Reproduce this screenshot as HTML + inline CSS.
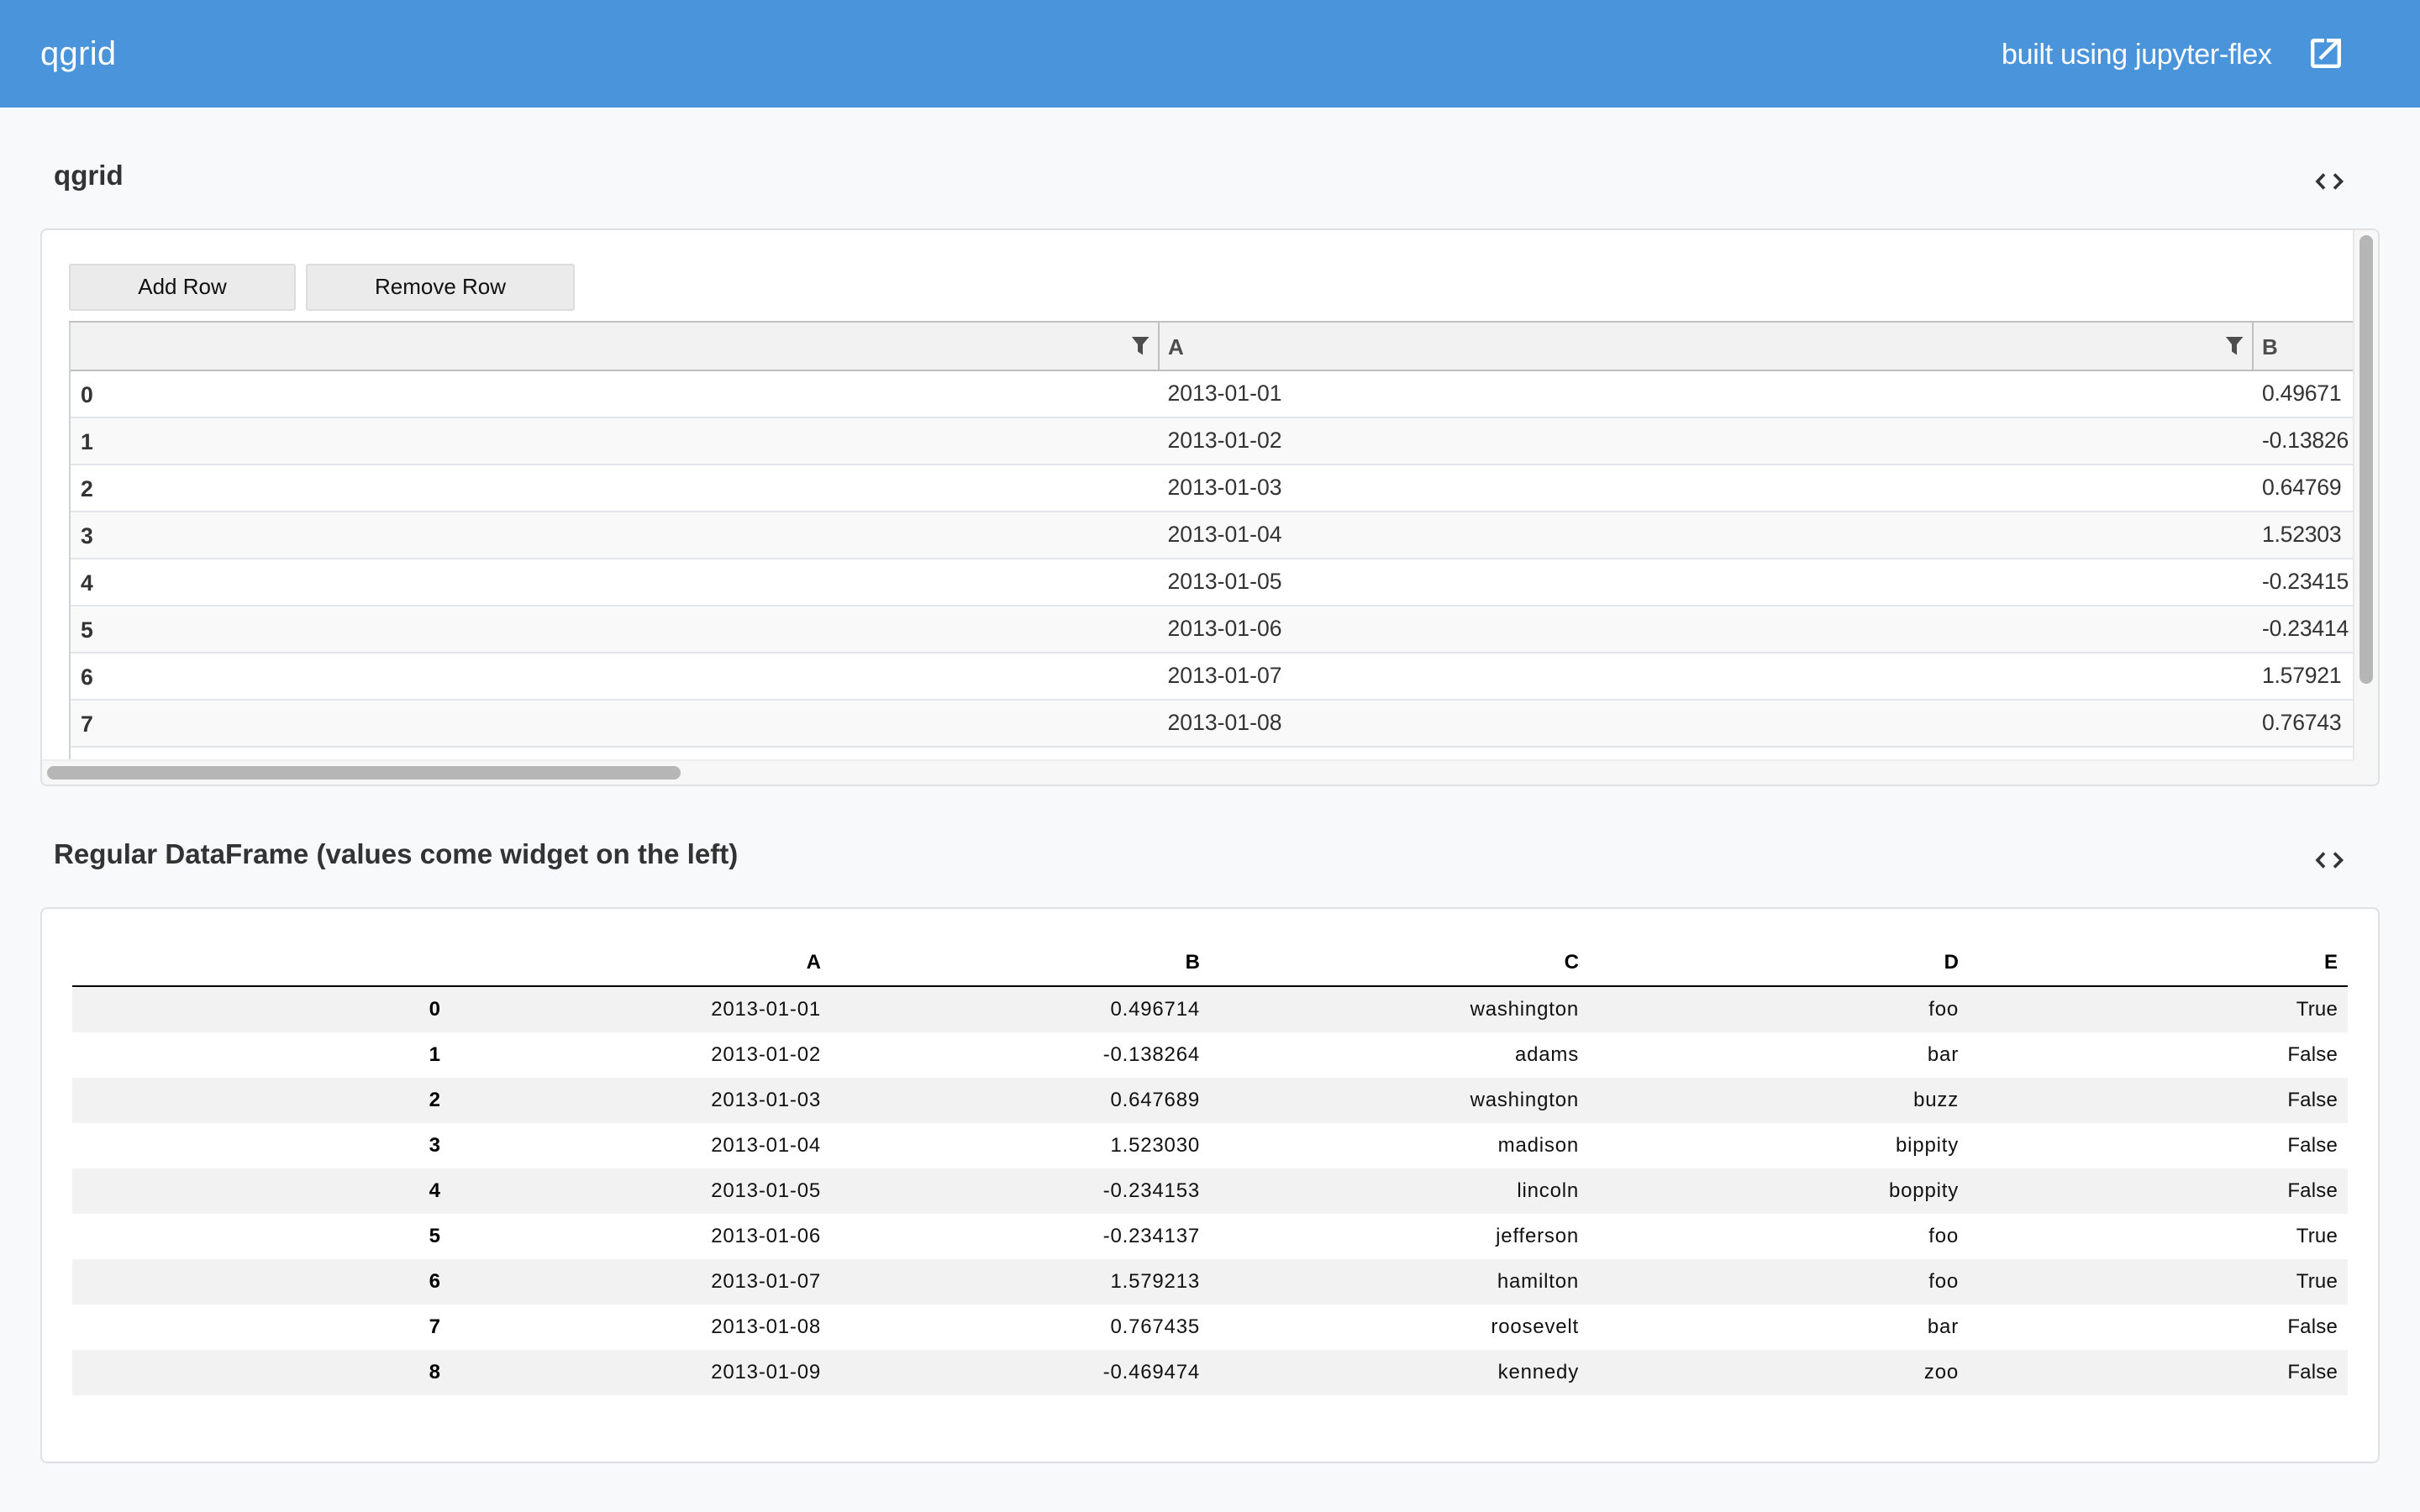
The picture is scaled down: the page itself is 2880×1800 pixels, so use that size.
<!DOCTYPE html>
<html>
<head>
<meta charset="utf-8">
<title>qgrid</title>
<style>
html,body{margin:0;padding:0;width:2880px;height:1800px;overflow:hidden;background:#f8f9fb;font-family:"Liberation Sans",Arial,sans-serif;color:#333}
div,span,table,td,th,tr,svg,button{box-sizing:border-box}
.abs{position:absolute}
#hdr{position:absolute;left:0;top:0;width:2880px;height:128px;background:#4a94dc;color:#fff}
#brand{position:absolute;left:48px;top:40px;font-size:40px;line-height:48px;letter-spacing:.3px}
#built{position:absolute;left:2382px;top:42px;font-size:34px;line-height:46px;white-space:nowrap;letter-spacing:-.3px}
.title{position:absolute;left:64px;font-size:33.1px;line-height:44px;font-weight:bold;color:#333;white-space:nowrap}
.card{position:absolute;left:48px;width:2784px;background:#fff;border:2px solid #dfe0e2;border-radius:8px;overflow:hidden}
.btn{position:absolute;top:314px;height:56px;background:#ebebeb;border:2px solid #dcdcdc;border-radius:3px;font-size:26px;line-height:50px;text-align:center;color:#111}
.gh{position:absolute;top:382px;height:60px;background:#f2f2f2;border-top:2px solid #c0c0c0;border-bottom:2px solid #bdbdbd}
.ghl{position:absolute;font-size:26px;line-height:30px;font-weight:bold;color:#4d4d4d;top:398px}
.sep{position:absolute;top:384px;width:2px;height:56px;background:#c0c0c0}
.r{position:absolute;left:84px;width:2716px;height:56px;border-bottom:2px solid #e2e6ea;font-size:26.6px;line-height:52px;color:#333;overflow:hidden}
.r.o{background:#f9f9f9}
.r span{position:absolute;top:0;white-space:nowrap}
.r .i{left:12px;font-weight:bold;top:2px}
.r .a{left:1305.5px}
.r .b{left:2608px;letter-spacing:-.25px}
.df{position:absolute;left:86px;top:1118px;width:2708px;table-layout:fixed;border-collapse:collapse;font-size:24px;color:#111}
.df th,.df td{padding:0 12px 0 0;text-align:right;height:54px;line-height:54px;white-space:nowrap}
.df thead th{height:56px;border-bottom:2px solid #000;font-weight:bold;color:#000;line-height:54px}
.df tbody th{font-weight:bold;color:#000}
.df tbody tr:nth-child(odd){background:#f2f2f2}
.df td{letter-spacing:.8px}
.df td.e{letter-spacing:.2px}
</style>
</head>
<body>
<div id="hdr">
  <div id="brand">qgrid</div>
  <div id="built">built using jupyter-flex</div>
  <svg class="abs" style="left:0;top:0" width="2880" height="128" viewBox="0 0 2880 128" fill="none" stroke="#fff" stroke-width="4.4">
    <path d="M2766 48.2H2754Q2752.2 48.2 2752.2 50V77Q2752.2 78.8 2754 78.8H2782Q2783.8 78.8 2783.8 77V60"/>
    <path d="M2761 70L2783 48"/>
    <path d="M2769 48.2H2783.8V60"/>
  </svg>
</div>

<div class="title" style="top:187.5px">qgrid</div>
<svg class="abs" style="left:2750px;top:200px" width="44" height="32" viewBox="2750 200 44 32" fill="none" stroke="#333" stroke-width="3.6">
  <path d="M2766 207.5L2758 216L2766 224.5"/><path d="M2778 207.5L2786.5 216L2778 224.5"/>
</svg>

<div class="card" style="top:272px;height:664px"></div>
<div class="btn" style="left:82px;width:270px">Add Row</div>
<div class="btn" style="left:364px;width:320px">Remove Row</div>

<div class="gh" style="left:82px;width:2718px"></div>
<div class="abs" style="left:82px;top:384px;width:2px;height:520px;background:#cfd2d6"></div>
<div class="sep" style="left:1378px"></div>
<div class="sep" style="left:2680px"></div>
<div class="ghl" style="left:1390px">A</div>
<div class="ghl" style="left:2692px">B</div>
<svg class="abs" style="left:1347px;top:401px" width="21" height="22" viewBox="0 0 21 22"><path fill="#4d4d4d" d="M0 0H20.5L13 9V21.5L7 17.5V9Z"/></svg>
<svg class="abs" style="left:2649px;top:401px" width="21" height="22" viewBox="0 0 21 22"><path fill="#4d4d4d" d="M0 0H20.5L13 9V21.5L7 17.5V9Z"/></svg>

<div class="r" style="top:442px"><span class="i">0</span><span class="a">2013-01-01</span><span class="b">0.49671</span></div>
<div class="r o" style="top:498px"><span class="i">1</span><span class="a">2013-01-02</span><span class="b">-0.13826</span></div>
<div class="r" style="top:554px"><span class="i">2</span><span class="a">2013-01-03</span><span class="b">0.64769</span></div>
<div class="r o" style="top:610px"><span class="i">3</span><span class="a">2013-01-04</span><span class="b">1.52303</span></div>
<div class="r" style="top:666px"><span class="i">4</span><span class="a">2013-01-05</span><span class="b">-0.23415</span></div>
<div class="r o" style="top:722px"><span class="i">5</span><span class="a">2013-01-06</span><span class="b">-0.23414</span></div>
<div class="r" style="top:778px"><span class="i">6</span><span class="a">2013-01-07</span><span class="b">1.57921</span></div>
<div class="r o" style="top:834px"><span class="i">7</span><span class="a">2013-01-08</span><span class="b">0.76743</span></div>

<!-- scrollbars -->
<div class="abs" style="left:50px;top:904px;width:2780px;height:30px;background:#f7f7f7;border-radius:0 0 6px 6px"></div>
<div class="abs" style="left:2800px;top:274px;width:30px;height:660px;background:#f7f7f7;border-radius:0 6px 6px 0"></div>
<div class="abs" style="left:2800px;top:274px;width:2px;height:632px;background:#e8e8e8"></div>
<div class="abs" style="left:50px;top:904px;width:2752px;height:2px;background:#eeeeee"></div>
<div class="abs" style="left:2808px;top:280px;width:16px;height:534px;background:#b6b6b6;border-radius:8px"></div>
<div class="abs" style="left:56px;top:912px;width:754px;height:16px;background:#b6b6b6;border-radius:8px"></div>

<div class="title" style="top:995.5px">Regular DataFrame (values come widget on the left)</div>
<svg class="abs" style="left:2750px;top:1008px" width="44" height="32" viewBox="2750 200 44 32" fill="none" stroke="#333" stroke-width="3.6">
  <path d="M2766 207.5L2758 216L2766 224.5"/><path d="M2778 207.5L2786.5 216L2778 224.5"/>
</svg>

<div class="card" style="top:1080px;height:662px"></div>
<table class="df">
<colgroup><col style="width:450px"><col style="width:453px"><col style="width:451px"><col style="width:451px"><col style="width:452px"><col style="width:451px"></colgroup>
<thead><tr><th></th><th>A</th><th>B</th><th>C</th><th>D</th><th>E</th></tr></thead>
<tbody>
<tr><th>0</th><td>2013-01-01</td><td>0.496714</td><td>washington</td><td>foo</td><td class="e">True</td></tr>
<tr><th>1</th><td>2013-01-02</td><td>-0.138264</td><td>adams</td><td>bar</td><td class="e">False</td></tr>
<tr><th>2</th><td>2013-01-03</td><td>0.647689</td><td>washington</td><td>buzz</td><td class="e">False</td></tr>
<tr><th>3</th><td>2013-01-04</td><td>1.523030</td><td>madison</td><td>bippity</td><td class="e">False</td></tr>
<tr><th>4</th><td>2013-01-05</td><td>-0.234153</td><td>lincoln</td><td>boppity</td><td class="e">False</td></tr>
<tr><th>5</th><td>2013-01-06</td><td>-0.234137</td><td>jefferson</td><td>foo</td><td class="e">True</td></tr>
<tr><th>6</th><td>2013-01-07</td><td>1.579213</td><td>hamilton</td><td>foo</td><td class="e">True</td></tr>
<tr><th>7</th><td>2013-01-08</td><td>0.767435</td><td>roosevelt</td><td>bar</td><td class="e">False</td></tr>
<tr><th>8</th><td>2013-01-09</td><td>-0.469474</td><td>kennedy</td><td>zoo</td><td class="e">False</td></tr>
</tbody>
</table>
</body>
</html>
